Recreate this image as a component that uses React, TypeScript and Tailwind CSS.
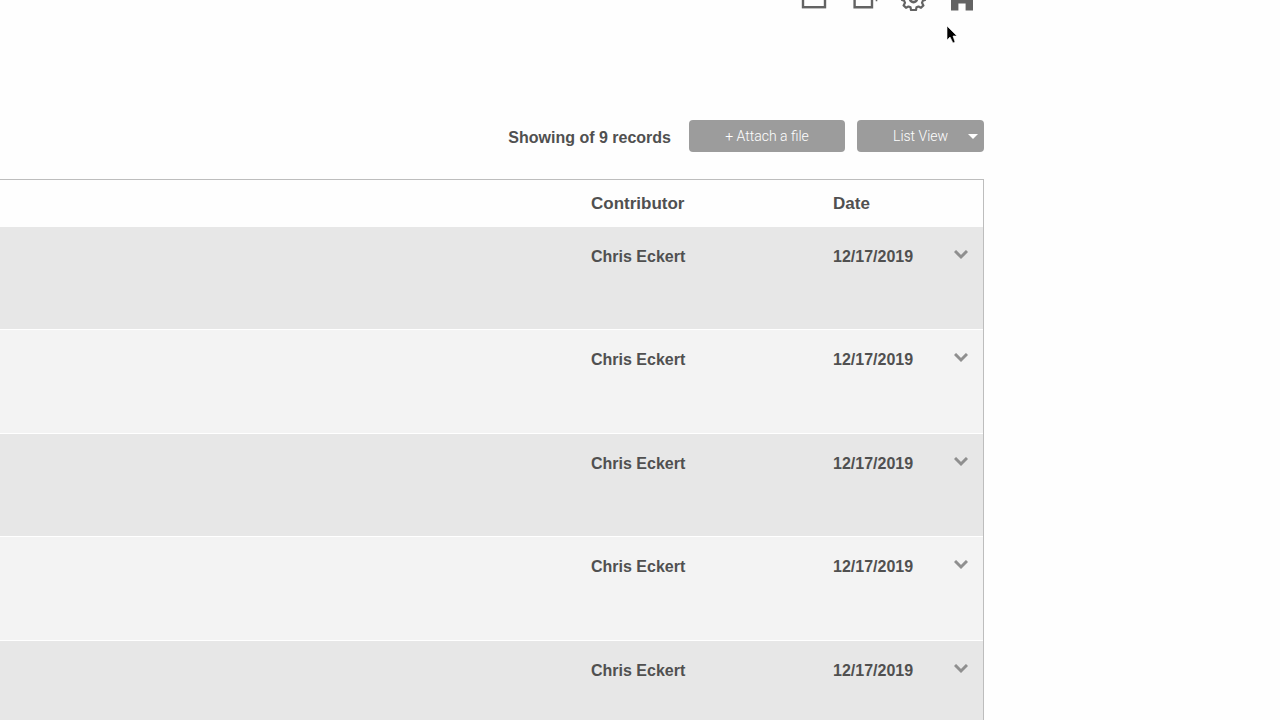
const records = [
  { id: 1, contributor: "Chris Eckert", date: "12/17/2019" },
  { id: 2, contributor: "Chris Eckert", date: "12/17/2019" },
  { id: 3, contributor: "Chris Eckert", date: "12/17/2019" },
  { id: 4, contributor: "Chris Eckert", date: "12/17/2019" },
  { id: 5, contributor: "Chris Eckert", date: "12/17/2019" },
];

function WindowIcon() {
  return (
    <svg viewBox="0 0 24 24" className="size-6 overflow-visible" fill="none" stroke="currentColor" strokeWidth="2.4">
      <rect x="0" y="3" width="22" height="16.2" />
    </svg>
  );
}

function ShareIcon() {
  return (
    <svg viewBox="0 0 24 24" className="size-6 overflow-visible" fill="none" stroke="currentColor" strokeWidth="2.4">
      <path d="M20 10V19.2H2.6V3H12" />
      <path d="M15 3H24.5V13.2" strokeWidth="1.6" />
    </svg>
  );
}

function GearIcon() {
  return (
    <svg viewBox="0 0 24 24" className="size-6 overflow-visible" fill="none" stroke="currentColor" strokeWidth="2.2">
      <path
        strokeLinejoin="round"
        d="M10 22L9.5 19.3L7.5 18.5L5 19.8L2.6 17.4L4 14.8L3.2 12.8L1 12V9L3.2 8.2L4 6.2L2.6 3.6L5 1.2L7.5 2.5L9.5 1.7L10 -1H15L15.5 1.7L17.5 2.5L20 1.2L22.4 3.6L21 6.2L21.8 8.2L24 9V12L21.8 12.8L21 14.8L22.4 17.4L20 19.8L17.5 18.5L15.5 19.3L15 22Z"
      />
      <circle cx="12.5" cy="10.5" r="3.6" strokeWidth="2.6" />
    </svg>
  );
}

function HomeIcon() {
  return (
    <svg viewBox="0 0 24 24" className="size-6" fill="currentColor">
      <path d="M12 0L24 11H23V22.6H15.6V15.6H8.4V22.6H1V11H0Z" />
    </svg>
  );
}

const tools = [
  { label: "Window", icon: WindowIcon },
  { label: "Share", icon: ShareIcon },
  { label: "Settings", icon: GearIcon },
  { label: "Home", icon: HomeIcon },
];

export default function App() {
  return (
    <div className="relative h-screen overflow-hidden bg-[#fefefe] font-['Liberation_Sans',Arial,sans-serif] text-[#505050]">
      <div className="mr-[296px]">
        {/* Toolbar, scrolled partly out of view */}
        <header className="-mt-3 flex justify-end gap-[25px] pr-[10px] text-[#636363]">
          {tools.map((tool) => (
            <button key={tool.label} type="button" aria-label={tool.label}>
              <tool.icon />
            </button>
          ))}
        </header>

        <div className="mt-[108px] flex items-center justify-end gap-3">
          <p className="mr-1.5 pt-1 text-base font-bold">Showing of 9 records</p>
          <button
            type="button"
            className="h-8 w-[156px] rounded bg-[#9c9c9c] font-[Roboto,sans-serif] text-sm font-light text-white"
          >
            + Attach a file
          </button>
          <div className="relative">
            <select
              aria-label="View"
              className="block h-8 w-[127px] appearance-none rounded bg-[#9c9c9c] pl-9 font-[Roboto,sans-serif] text-sm font-light text-white"
            >
              <option>List View</option>
            </select>
            <svg
              viewBox="0 0 10 5"
              className="pointer-events-none absolute top-3.5 right-1.5 h-[5px] w-2.5"
              fill="white"
              aria-hidden="true"
            >
              <path d="M0 0H10L5 5Z" />
            </svg>
          </div>
        </div>

        <table className="mt-[27px] w-full table-fixed border-separate border-spacing-0 border-t border-r border-[#bdbdbd] text-left">
          <colgroup>
            <col />
            <col className="w-[242px]" />
            <col className="w-[111px]" />
            <col className="w-[39px]" />
          </colgroup>
          <thead>
            <tr className="h-[47px] text-[17px]">
              <td />
              <th scope="col">Contributor</th>
              <th scope="col">Date</th>
              <td />
            </tr>
          </thead>
          <tbody>
            {records.map((record) => (
              <tr
                key={record.id}
                className="h-[103px] align-top odd:bg-[#e7e7e7] even:h-[104px] even:bg-[#f3f3f3]"
              >
                <td className="border-b border-white" />
                <td className="border-b border-white pt-[18px] font-bold">{record.contributor}</td>
                <td className="border-b border-white pt-[18px] font-bold">{record.date}</td>
                <td className="border-b border-white pt-[23px]">
                  <button type="button" aria-label="Record actions" className="ml-2.5 block text-[#8f8f8f]">
                    <svg
                      viewBox="0 0 14 10"
                      className="h-2.5 w-3.5"
                      fill="none"
                      stroke="currentColor"
                      strokeWidth="3"
                    >
                      <path d="M1 1L7 7L13 1" />
                    </svg>
                  </button>
                </td>
              </tr>
            ))}
          </tbody>
        </table>
      </div>

      {/* Mouse pointer */}
      <svg
        viewBox="0 0 12 19"
        className="absolute top-[25px] right-[322px] h-[19px] w-3"
        fill="black"
        stroke="white"
        strokeWidth="0.6"
        aria-hidden="true"
      >
        <path d="M1 1V15L4 12L7 18L9 17L7 11H11Z" />
      </svg>
    </div>
  );
}
